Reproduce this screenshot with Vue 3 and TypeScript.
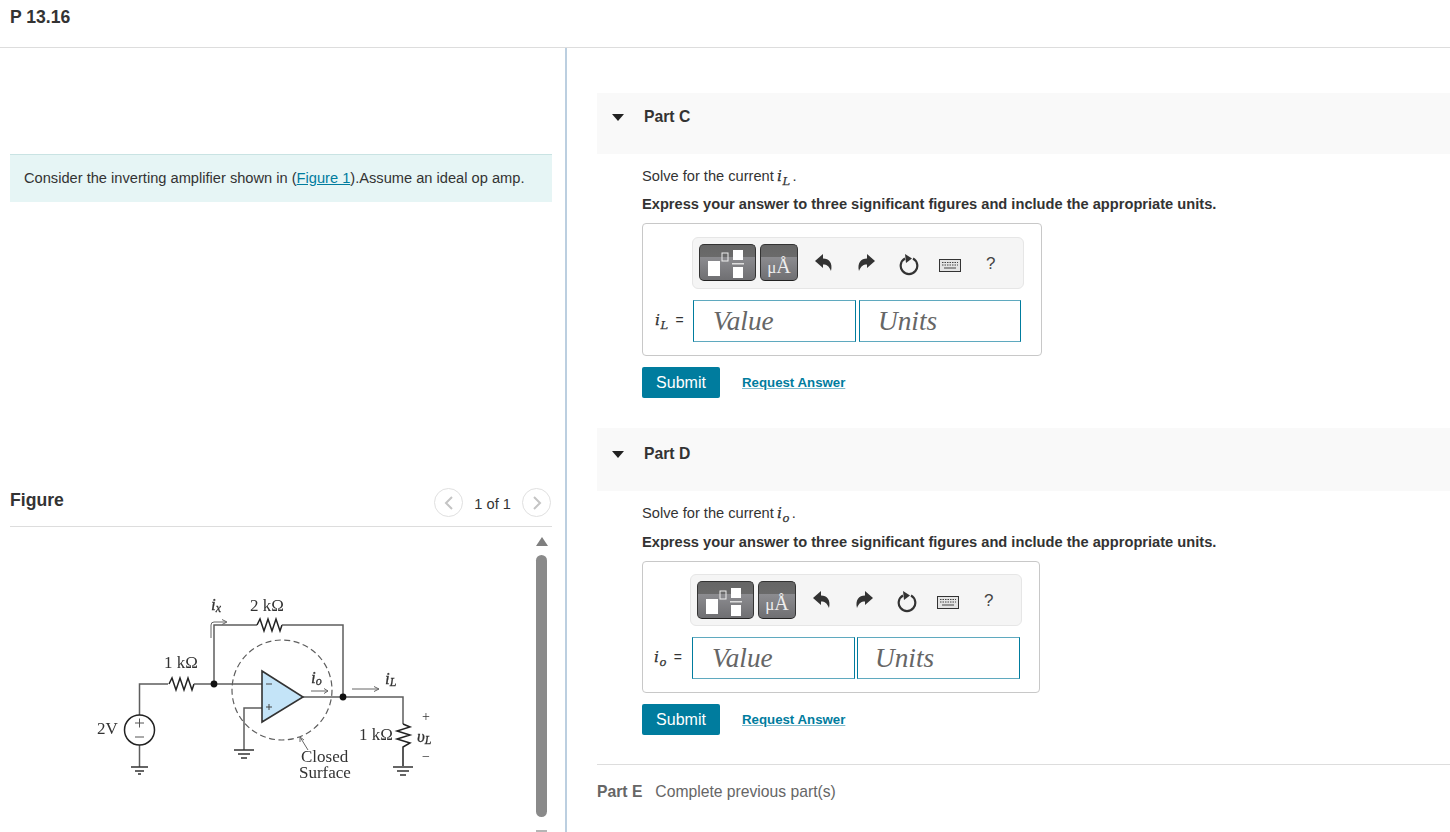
<script setup lang="ts">
interface Part {
  id: string
  sub: string
  wide: boolean
}

const parts: Part[] = [
  { id: 'C', sub: 'L', wide: true },
  { id: 'D', sub: 'o', wide: false }
]

// zigzag for the horizontal resistors
const resistor = (x: number, y: number): string =>
  `M${x} ${y} l3 -6 l4 12 l4 -12 l4 12 l4 -12 l4 12 l2 -6`
</script>

<template>
  <div class="page">
    <header class="top">P 13.16</header>
    <div class="columns">
      <section class="left">
        <p class="intro">
          Consider the inverting amplifier shown in (<a class="figlink">Figure 1</a>).Assume an ideal op amp.
        </p>
        <div class="figHead">
          <h2>Figure</h2>
          <div class="pager">
            <span class="round">
              <svg width="10" height="14" viewBox="0 0 10 14"><path d="M8 1 L2 7 L8 13" fill="none" stroke="#c4c4c4" stroke-width="2" /></svg>
            </span>
            <span class="count">1 of 1</span>
            <span class="round">
              <svg width="10" height="14" viewBox="0 0 10 14"><path d="M2 1 L8 7 L2 13" fill="none" stroke="#c4c4c4" stroke-width="2" /></svg>
            </span>
          </div>
        </div>
        <div class="figBody">
          <svg class="circuit" width="525" height="305" viewBox="10 527 525 305">
            <g fill="none" stroke="#5e5e5e" stroke-width="1.500">
              <path d="M139.500 715 V684 H168" />
              <path :d="resistor(169, 684)" stroke="#222" />
              <path d="M194 684 H262" />
              <path d="M214 684 V625 H257" />
              <path :d="resistor(257, 625)" stroke="#222" />
              <path d="M282 625 H343 V697" />
              <path d="M303 697 H403 V724" />
              <path d="M403 724 l7 3 l-13 4 l13 4 l-13 4 l13 4 l-7 4 V766" stroke="#222" />
              <path d="M139.500 745 V767" />
              <path d="M262 708 H244 V750" />
              <circle cx="282" cy="690" r="50" stroke-width="1.200" stroke-dasharray="6 3.500" />
            </g>
            <g stroke="#333" stroke-width="1.500">
              <path d="M131 767 H148 M135 771 H144 M138 774 H141" />
              <path d="M234 750 H254 M238 754 H250 M241 758 H247" />
              <path d="M393 767 H413 M397 771 H409 M400 775 H406" />
            </g>
            <circle cx="139.500" cy="730" r="15" fill="#fff" stroke="#222" stroke-width="1.500" />
            <path d="M135 723 H144 M139.500 718.500 V727.500 M135 737 H144" stroke="#555" stroke-width="1" />
            <path d="M262 671 L303 697 L262 722 Z" fill="#c4e4f8" stroke="#333" stroke-width="1.600" />
            <path d="M266 684 H272 M266 707 H272 M269 704 V710" stroke="#444" stroke-width="1" />
            <circle cx="214" cy="684" r="3.400" fill="#111" />
            <circle cx="343" cy="697" r="3.400" fill="#111" />
            <g fill="none" stroke="#666" stroke-width="1">
              <path d="M211 638 V625 Q211 622 214 622 H226" />
              <path d="M222 619.500 L227 622 L222 624.500" />
              <path d="M311 691 H328 M324 688.500 L328 691 L324 693.500" />
              <path d="M352 689 H379 M374 686.500 L379 689 L374 691.500" />
              <path d="M308 750 L300 737 M300 742 L300 737 L304 740" />
            </g>
            <g class="lab">
              <text x="250" y="611">2 kΩ</text>
              <text x="164" y="668">1 kΩ</text>
              <text x="97" y="734">2V</text>
              <text x="359" y="740">1 kΩ</text>
              <text x="301" y="762">Closed</text>
              <text x="299" y="778">Surface</text>
              <text class="it" x="211" y="610">i<tspan class="s" dy="2">x</tspan></text>
              <text class="it" x="311" y="683">i<tspan class="s" dy="2">o</tspan></text>
              <text class="it" x="385" y="684">i<tspan class="s" dy="2">L</tspan></text>
              <text class="it" x="417" y="742">υ<tspan class="s" dy="2">L</tspan></text>
              <text class="sm" x="422" y="721">+</text>
              <text class="sm" x="422" y="761">−</text>
            </g>
          </svg>
          <div class="scroll">
            <span class="up"></span>
            <span class="thumb"></span>
            <span class="down"></span>
          </div>
        </div>
      </section>

      <main class="right">
        <section v-for="p in parts" :key="p.id" class="part" :class="{ narrow: !p.wide }">
          <div class="partHead">
            <span class="tri"></span>
            <span class="partName">Part {{ p.id }}</span>
          </div>
          <div class="partBody">
            <p class="solve">Solve for the current <i class="math">i<sub>{{ p.sub }}</sub></i><span class="dot">.</span></p>
            <p class="express">Express your answer to three significant figures and include the appropriate units.</p>
            <div class="answer">
              <div class="toolbar">
                <button class="tool tpl">
                  <svg width="57" height="37" viewBox="0 0 57 37">
                    <rect x="9" y="17" width="12" height="15" fill="#fff" />
                    <rect x="23" y="9" width="6" height="8" fill="none" stroke="#eee" />
                    <rect x="34" y="6" width="10" height="10" fill="#fff" />
                    <rect x="33" y="19" width="12" height="1.500" fill="#ddd" />
                    <rect x="34" y="23" width="10" height="11" fill="#fff" />
                  </svg>
                </button>
                <button class="tool unit"><span class="mu">μ</span><span>Å</span></button>
                <svg class="ico undo" width="18" height="18" viewBox="0 0 18 18">
                  <path d="M0 7 L8 0 V4.500 C14 4.500 18 9 16 17 C14 12 12 10.500 8 10.500 V14 Z" fill="#333" />
                </svg>
                <svg class="ico redo" width="18" height="18" viewBox="0 0 18 18">
                  <path d="M18 7 L10 0 V4.500 C4 4.500 0 9 2 17 C4 12 6 10.500 10 10.500 V14 Z" fill="#333" />
                </svg>
                <svg class="ico reset" width="20" height="22" viewBox="0 0 20 22">
                  <path d="M6 4.500 A8.300 8.300 0 1 0 14 4.500" fill="none" stroke="#333" stroke-width="2.200" />
                  <path d="M6 0 L13 4.500 L7 9 Z" fill="#333" />
                </svg>
                <svg class="ico keys" width="22" height="14" viewBox="0 0 22 14">
                  <rect x="0.500" y="0.500" width="21" height="12" fill="#e4e4e4" stroke="#333" />
                  <path d="M3 3.500 H19 M3 6 H19" stroke="#444" stroke-dasharray="1.500 1" />
                  <path d="M5 9 H17" stroke="#444" />
                </svg>
                <span class="help">?</span>
              </div>
              <div class="inputs">
                <span class="eq"><i class="math">i<sub>{{ p.sub }}</sub></i> =</span>
                <div class="field">Value</div>
                <div class="field">Units</div>
              </div>
            </div>
            <div class="actions">
              <button class="submit">Submit</button>
              <a class="req">Request Answer</a>
            </div>
          </div>
        </section>
        <div class="partE"><b>Part E</b><span>Complete previous part(s)</span></div>
      </main>
    </div>
  </div>
</template>

<style>
html, body {
  margin: 0;
  overflow: hidden;
  background: #fff;
}
</style>

<style scoped>
.page {
  width: 1450px;
  height: 832px;
  overflow: hidden;
  font-family: "Liberation Sans", Arial, sans-serif;
  color: #333;
}

.top {
  box-sizing: border-box;
  padding: 7px 10px 0;
  border-bottom: 1px solid #ddd;
  height: 48px;
  font-size: 17.600px;
  line-height: 20px;
  font-weight: bold;
}

.columns {
  display: flex;
  height: 784px;
}

.left {
  width: 565px;
  flex: none;
  border-right: 2px solid #bccfe0;
}

.intro {
  margin: 106px 0 0 10px;
  width: 542px;
  height: 48px;
  box-sizing: border-box;
  padding: 15px 14px 0;
  background: #e6f5f5;
  border-top: 1px solid #c9e3e3;
  font-size: 14.650px;
  line-height: 17px;
  white-space: nowrap;
}

.figlink {
  color: #007c9e;
  text-decoration: underline;
}

.figHead {
  margin: 284px 0 0 10px;
  width: 542px;
  height: 41px;
  box-sizing: border-box;
  padding-right: 1px;
  border-bottom: 1px solid #ddd;
  display: flex;
  justify-content: space-between;
}

.figHead h2 {
  margin: 4px 0 0;
  font-size: 17.600px;
  line-height: 20px;
  font-weight: bold;
}

.pager {
  display: flex;
  align-items: center;
  height: 29px;
  margin-top: 2px;
}

.round {
  width: 27px;
  height: 27px;
  border: 1px solid #e0e0e0;
  border-radius: 50%;
  display: flex;
  align-items: center;
  justify-content: center;
}

.count {
  margin: 0 11px;
  padding-top: 3px;
  font-size: 14.650px;
}

.figBody {
  display: flex;
  margin-left: 10px;
  height: 305px;
}

.circuit {
  display: block;
  flex: none;
  filter: blur(0.5px);
}

.lab text {
  font-family: "Liberation Serif", "Times New Roman", serif;
  font-size: 17px;
  fill: #333;
}

.lab .it {
  font-style: italic;
  stroke: #333;
  stroke-width: 0.3px;
}

.lab .s {
  font-size: 12px;
}

.lab .sm {
  font-size: 14px;
}

.scroll {
  width: 13px;
  display: flex;
  flex-direction: column;
  align-items: center;
}

.up {
  margin-top: 10px;
  border-left: 6.500px solid transparent;
  border-right: 6.500px solid transparent;
  border-bottom: 9px solid #7f7f7f;
}

.thumb {
  margin-top: 9px;
  width: 11px;
  height: 262px;
  flex: none;
  background: #8a8a8a;
  border-radius: 6px;
}

.down {
  margin-top: 13px;
  width: 11px;
  height: 2px;
  background: #b5b5b5;
}

.right {
  flex: 1;
  padding: 45px 0 0 30px;
  min-width: 0;
}

.part {
  height: 335px;
}

.part.narrow {
  height: 337px;
}

.partHead {
  height: 61px;
  background: #f9f9f9;
  display: flex;
  padding-top: 15px;
  box-sizing: border-box;
}

.narrow .partHead {
  height: 63px;
  padding-top: 17px;
}

.tri {
  margin: 6px 0 0 15px;
  width: 0;
  height: 0;
  border-left: 6px solid transparent;
  border-right: 6px solid transparent;
  border-top: 7px solid #222;
}

.partName {
  margin-left: 20px;
  font-size: 15.700px;
  line-height: 18px;
  font-weight: bold;
}

.partBody {
  padding-left: 45px;
}

.solve {
  margin: 13px 0 0;
  font-size: 14.650px;
  line-height: 18px;
}

.dot {
  margin-left: 2px;
}

.express {
  margin: 10px 0 0;
  font-size: 14.650px;
  line-height: 18px;
  font-weight: bold;
}

.narrow .express {
  margin-top: 11px;
}

.math {
  font-family: "DejaVu Serif", "Liberation Serif", serif;
  font-size: 15.500px;
  font-style: italic;
  color: #333;
  margin-left: -1px;
  letter-spacing: 0.500px;
  -webkit-text-stroke: 0.25px #333;
}

.math sub {
  font-size: 11.500px;
  line-height: 0;
}

.answer {
  margin-top: 10px;
  width: 400px;
  height: 133px;
  box-sizing: border-box;
  border: 1px solid #c8c8c8;
  border-radius: 4px;
  padding: 13px 0 0 49px;
}

.narrow .answer {
  width: 398px;
  height: 132px;
  padding: 12px 0 0 47px;
}

.toolbar {
  width: 332px;
  height: 52px;
  box-sizing: border-box;
  border: 1px solid #e6e6e6;
  border-radius: 6px;
  background: #f5f5f5;
  display: flex;
  align-items: flex-start;
  padding: 6px 0 0 6px;
}

.tool {
  padding: 0;
  height: 37px;
  border: 1px solid #333;
  border-bottom-color: #222;
  border-radius: 5px;
  background: linear-gradient(#666 0, #6a6a6a 33%, #8c8c90 34%, #6f6f72 100%);
  display: block;
}

.narrow .tool {
  height: 38px;
}

.tpl {
  width: 57px;
}

.tpl svg {
  display: block;
  margin: -1px;
}

.unit {
  width: 38px;
  margin-left: 4px;
  color: #eee;
  font-family: "Liberation Serif", serif;
  font-size: 20px;
  line-height: 35px;
  padding-top: 4px;
}

.mu {
  font-size: 17px;
}

.ico {
  flex: none;
}

.undo {
  margin: 10px 0 0 17px;
}

.redo {
  margin: 10px 0 0 24px;
}

.reset {
  margin: 10px 0 0 24px;
}

.keys {
  margin: 15px 0 0 20px;
}

.help {
  margin: 9px 0 0 25px;
  font-size: 17px;
  line-height: 22px;
  color: #444;
}

.inputs {
  display: flex;
  margin: 11px 0 0 1px;
  position: relative;
}

.narrow .inputs {
  margin: 11px 0 0 2px;
}

.eq {
  position: absolute;
  left: -37px;
  top: 11px;
  font-size: 14px;
  white-space: nowrap;
}

.eq .math {
  margin-right: 3px;
}

.field {
  width: 163px;
  height: 42px;
  box-sizing: border-box;
  border: 1px solid;
  border-color: #5fa9bf #007c9e;
  padding-left: 19px;
  font-family: "Liberation Serif", "Times New Roman", serif;
  font-style: italic;
  font-size: 27.300px;
  line-height: 40px;
  color: #666;
}

.field + .field {
  margin-left: 3px;
  width: 162px;
  padding-left: 18px;
}

.narrow .field + .field {
  margin-left: 2px;
  width: 163px;
  padding-left: 17px;
}

.actions {
  margin-top: 11px;
  display: flex;
  align-items: center;
}

.submit {
  width: 78px;
  height: 31px;
  padding: 0;
  border: 0;
  border-radius: 2px;
  background: #007c9e;
  color: #fff;
  font-family: inherit;
  font-size: 16px;
}

.req {
  margin-left: 22px;
  color: #007c9e;
  font-size: 13.250px;
  font-weight: bold;
  text-decoration: underline;
  text-decoration-color: #7fbccd;
}

.partE {
  border-top: 1px solid #ddd;
  margin-top: -1px;
  padding-top: 18px;
  font-size: 15.700px;
  line-height: 18px;
  color: #666;
  display: flex;
  gap: 13px;
}
</style>
